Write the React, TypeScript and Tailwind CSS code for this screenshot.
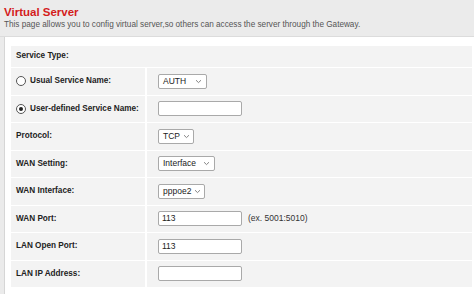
import React from "react";

type Row = {
  label: string;
  radio?: "off" | "on";
  control?: React.ReactNode;
  hint?: string;
};

function Chevron() {
  return (
    <svg width="7" height="5" viewBox="0 0 7 5" className="shrink-0">
      <path d="M1 1.2 L3.5 3.6 L6 1.2" fill="none" stroke="#777" strokeWidth="0.9" />
    </svg>
  );
}

function Select({ value, width }: { value: string; width: string }) {
  return (
    <div
      className={`${width} h-[15px] flex items-center justify-between gap-[3px] pl-[4px] pr-[4px] bg-white border border-[#a9a9a9] rounded-[2px] text-[8.5px] text-[#222]`}
    >
      <span>{value}</span>
      <Chevron />
    </div>
  );
}

function TextBox({ value = "" }: { value?: string }) {
  return (
    <div className="w-[84px] h-[15px] flex items-center pl-[3px] bg-white border border-[#a9a9a9] rounded-[2px] text-[8.5px] text-[#222]">
      {value}
    </div>
  );
}

function Radio({ checked }: { checked: boolean }) {
  return (
    <span className="w-[10px] h-[10px] rounded-full border border-[#555] bg-white flex items-center justify-center shrink-0">
      {checked ? <span className="w-[4px] h-[4px] rounded-full bg-[#222]" /> : null}
    </span>
  );
}

const rows: Row[] = [
  { label: "Usual Service Name:", radio: "off", control: <Select value="AUTH" width="w-[49px]" /> },
  { label: "User-defined Service Name:", radio: "on", control: <TextBox /> },
  { label: "Protocol:", control: <Select value="TCP" width="w-[36px]" /> },
  { label: "WAN Setting:", control: <Select value="Interface" width="w-[57px]" /> },
  { label: "WAN Interface:", control: <Select value="pppoe2" width="w-[47px]" /> },
  { label: "WAN Port:", control: <TextBox value="113" />, hint: "(ex. 5001:5010)" },
  { label: "LAN Open Port:", control: <TextBox value="113" /> },
  { label: "LAN IP Address:", control: <TextBox /> },
];

export default function App() {
  return (
    <div className="w-[474px] h-[294px] overflow-hidden bg-[#ebebeb] font-['Liberation_Sans',Arial,sans-serif]">
      <div className="h-[37px] pl-[4px] pt-[5px] border-b border-[#dcdcdc]">
        <div className="text-[11.5px] leading-[14px] font-bold text-[#d41c1c]">Virtual Server</div>
        <div className="text-[8.2px] leading-[12px] text-[#555]">
          This page allows you to config virtual server,so others can access the server through the Gateway.
        </div>
      </div>
      <div className="ml-[4px] h-[257px] bg-white border-l border-[#d6d6d6] pl-[6px] pt-[9px] pr-[2px]">
        <div className="flex flex-col gap-[1px]">
          <div className="h-[21px] flex items-center pl-[5px] bg-[#f3f3f3] text-[8.2px] font-bold text-[#222]">
            Service Type:
          </div>
          {rows.map((row, index) => (
            <div key={index} className="h-[26.5px] flex gap-[2px]">
              <div className="w-[134px] shrink-0 bg-[#f3f3f3] flex items-center gap-[4px] pl-[5px] text-[8.2px] font-bold text-[#222]">
                {row.radio ? <Radio checked={row.radio === "on"} /> : null}
                <span>{row.label}</span>
              </div>
              <div className="flex-1 bg-[#f3f3f3] flex items-center gap-[6px] pl-[11px]">
                {row.control}
                {row.hint ? <span className="text-[8.5px] text-[#333]">{row.hint}</span> : null}
              </div>
            </div>
          ))}
        </div>
      </div>
    </div>
  );
}
